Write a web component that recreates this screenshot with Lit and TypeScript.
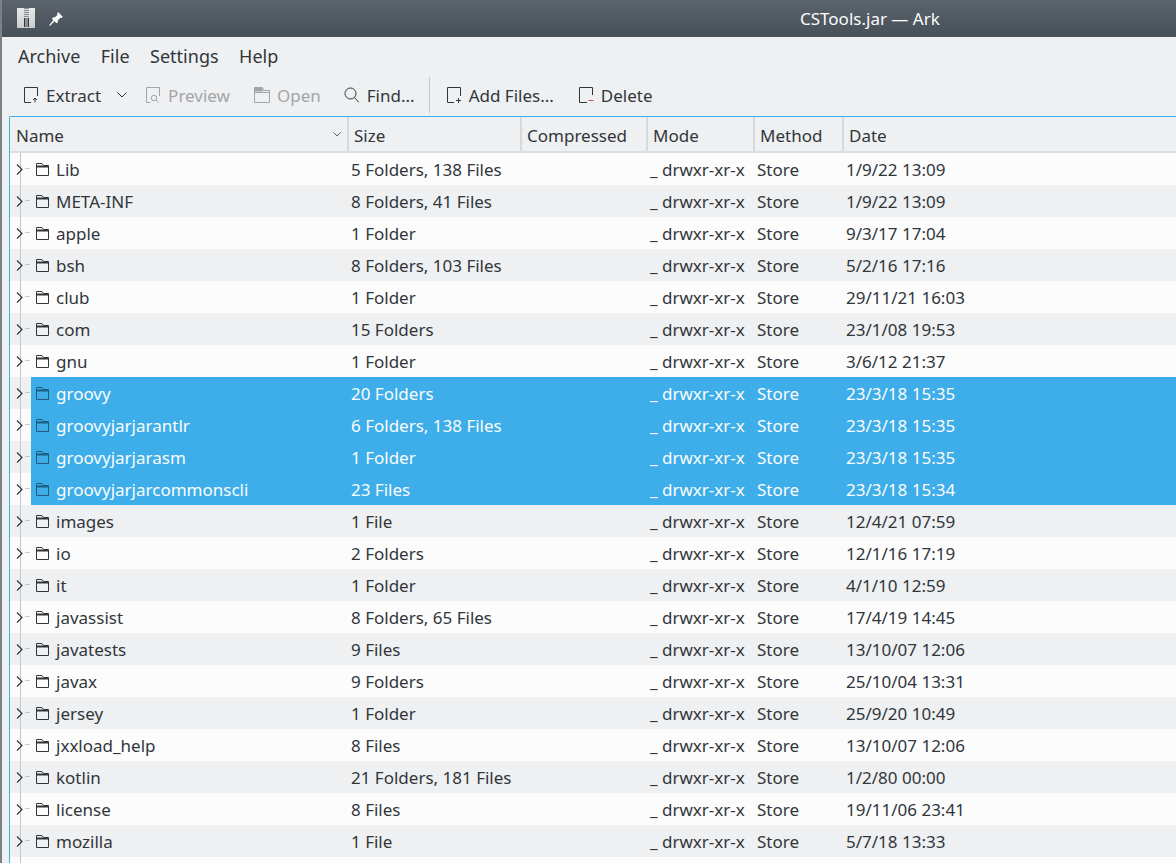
import { LitElement, html, css, svg } from "lit";
import { customElement } from "lit/decorators.js";

const rows: [string, string, string][] = [
  ["Lib", "5 Folders, 138 Files", "1/9/22 13:09"],
  ["META-INF", "8 Folders, 41 Files", "1/9/22 13:09"],
  ["apple", "1 Folder", "9/3/17 17:04"],
  ["bsh", "8 Folders, 103 Files", "5/2/16 17:16"],
  ["club", "1 Folder", "29/11/21 16:03"],
  ["com", "15 Folders", "23/1/08 19:53"],
  ["gnu", "1 Folder", "3/6/12 21:37"],
  ["groovy", "20 Folders", "23/3/18 15:35"],
  ["groovyjarjarantlr", "6 Folders, 138 Files", "23/3/18 15:35"],
  ["groovyjarjarasm", "1 Folder", "23/3/18 15:35"],
  ["groovyjarjarcommonscli", "23 Files", "23/3/18 15:34"],
  ["images", "1 File", "12/4/21 07:59"],
  ["io", "2 Folders", "12/1/16 17:19"],
  ["it", "1 Folder", "4/1/10 12:59"],
  ["javassist", "8 Folders, 65 Files", "17/4/19 14:45"],
  ["javatests", "9 Files", "13/10/07 12:06"],
  ["javax", "9 Folders", "25/10/04 13:31"],
  ["jersey", "1 Folder", "25/9/20 10:49"],
  ["jxxload_help", "8 Files", "13/10/07 12:06"],
  ["kotlin", "21 Folders, 181 Files", "1/2/80 00:00"],
  ["license", "8 Files", "19/11/06 23:41"],
  ["mozilla", "1 File", "5/7/18 13:33"],
];
const selected = new Set([7, 8, 9, 10]);

const ico = (body: unknown) =>
  html`<svg class="ico" width="16" height="16" viewBox="0 0 16 16" fill="none" stroke="currentColor" stroke-width="1">${body}</svg>`;

const extractIcon = ico(svg`<path d="M8 15.5H1.5V.5H14.5V9"/><path d="M12 15.5V11M10 13L12 11L14 13"/>`);
const previewIcon = ico(svg`<path d="M5.5 15.5H1.5V.5H14.5V9"/><circle cx="9" cy="11" r="2.7"/><path d="M11 13L13.5 15.5"/>`);
const openIcon = ico(svg`<path d="M.5 15.5V.5H8.5L10 3.5H15.5V15.5Z"/><path d="M.5 5.5H15.5" stroke-width="1"/><path d="M1 1H8L9.3 4.5H1Z" fill="currentColor" stroke="none"/>`);
const findIcon = ico(svg`<circle cx="7.5" cy="6.5" r="5.5"/><path d="M11.5 10.5L16 15.5"/>`);
const addIcon = ico(svg`<path d="M8 15.5H1.5V.5H14.5V9"/><path d="M12.5 11V16M10 13.5H15"/>`);
const deleteIcon = ico(svg`<path d="M9 15.5H1.5V.5H14.5V8"/><path d="M10.5 13.5H15.5" stroke="#da4453"/>`);
const folder = html`<svg class="folder" width="13" height="13" viewBox="0 0 13 13" fill="none" stroke="currentColor"><path d="M.5 12.5V.5H6L7.5 2.5H12.5V12.5Z"/><path d="M.5 3.5H12.5" stroke-width="2"/></svg>`;
const branch = html`<svg class="branch" width="21" height="32" viewBox="0 0 21 32"><path d="M10.5 0V32M15 15.5H20" stroke="#c4c6c8" fill="none"/><path d="M7 11.5L12 16.5L7 21.5" stroke="#31363b" stroke-width="1.2" fill="none"/></svg>`;

@customElement("app-root")
export class AppRoot extends LitElement {
  static styles = css`
    :host { display: flex; flex-direction: column; width: 1176px; height: 863px; overflow: hidden; background: #eff0f1; color: #31363b; font: 17px/22px "Noto Sans", sans-serif; border-left: 2px solid #7d8184; box-sizing: border-box; }
    .title { height: 37px; flex: none; margin-left: -2px; display: flex; align-items: center; background: linear-gradient(#5b646c, #475057); color: #fcfcfc; position: relative; }
    .zip { margin-left: 17px; width: 18px; height: 20px; background: linear-gradient(#e8eaea, #c9cccd); position: relative; margin-top: -1px; }
    .zip i { position: absolute; left: 7px; top: 0; width: 5px; height: 10px; background: repeating-linear-gradient(#8d9092 0 1px, #d6d8d9 1px 2px); }
    .zip b { position: absolute; left: 7px; top: 10px; width: 5px; height: 9px; background: linear-gradient(90deg, #33383c 0 1px, #8b8e90 1px 4px, #33383c 4px); }
    .pin { margin-left: 14px; }
    .name { position: absolute; left: 800px; top: 8px; }
    .menu { height: 38px; flex: none; display: flex; align-items: center; gap: 20.5px; padding-left: 16px; box-sizing: border-box; font-size: 18px; }
    .tools { height: 41px; flex: none; display: flex; align-items: center; padding-left: 21px; box-sizing: border-box; padding-bottom: 1px; }
    .tool { display: flex; align-items: center; gap: 7px; white-space: nowrap; }
    .tool > span { padding-top: 2px; }
    .tool.off { color: #a2a5a8; }
    .tool.wide { gap: 8px; }
    .ml24 { margin-left: 24px; }
    .ml22 { margin-left: 22px; }
    .ico { flex: none; }
    .chevT { margin-left: 16px; margin-right: 18px; flex: none; }
    .sep { width: 1px; height: 36px; background: #c4c6c8; margin: 0 16px 0 14px; }
    .frame { margin-left: 7px; flex: 1; min-height: 0; border: 1px solid #3daee9; border-width: 1px 0 0 1px; border-top-left-radius: 2px; background: #fcfcfc; }
    .head, .row { display: grid; grid-template-columns: 339px 173px 126px 107px 89px 1fr; }
    .head { height: 36px; background: #eff0f1; border-bottom: 2px solid #dcdddf; box-sizing: border-box; }
    .head > div { padding-left: 5px; padding-top: 3px; display: flex; align-items: center; border-right: 2px solid #d6d8da; box-sizing: border-box; }
    .head > div:last-child { border-right: 0; }
    .head .nm { justify-content: space-between; padding-left: 6px; padding-right: 6px; }
    .chevH { flex: none; margin-top: -3px; }
    .row { height: 32px; background: #fcfcfc; line-height: 34px; position: relative; }
    .row.alt { background: #eff0f1; }
    .cell { padding-left: 2px; white-space: nowrap; overflow: hidden; }
    .first { display: flex; align-items: center; padding: 0; color: #31363b; }
    .branch { flex: none; }
    .nameCell { flex: 1; height: 100%; box-sizing: border-box; display: flex; align-items: center; gap: 7px; padding: 1px 0 0 5px; }
    .row.sel .cell:not(.first), .row.sel .nameCell { background: #3daee9; color: #fcfcfc; }
    .row.sel .folder { color: #1f5d80; }
    .folder { flex: none; margin-top: -1px; }
  `;

  render() {
    const chevT = html`<svg class="chevT" width="10" height="6" viewBox="0 0 10 6" fill="none" stroke="currentColor"><path d="M.5 .5L5 5L9.5 .5"/></svg>`;
    const chevH = html`<svg class="chevH" width="8" height="5" viewBox="0 0 8 5" fill="none" stroke="#5c6065"><path d="M.5 .5L4 4L7.5 .5"/></svg>`;
    return html`
      <div class="title">
        <span class="zip"><i></i><b></b></span>
        <svg class="pin" width="15" height="15" viewBox="0 0 14 14" fill="currentColor"><path d="M8.5 1L13 5.5L11.5 6.5L10.8 6.2L8.3 8.7L8.2 10.5L7 11.5L2.7 7.2L3.8 6L5.5 5.9L8 3.4L7.6 2.5Z"/><path d="M4.5 9.5L1 13.2L1 13L4.2 9.2Z" stroke="currentColor"/></svg>
        <span class="name">CSTools.jar — Ark</span>
      </div>
      <div class="menu"><span>Archive</span><span>File</span><span>Settings</span><span>Help</span></div>
      <div class="tools">
        <div class="tool">${extractIcon}<span>Extract</span></div>${chevT}
        <div class="tool off">${previewIcon}<span>Preview</span></div>
        <div class="tool off ml24">${openIcon}<span>Open</span></div>
        <div class="tool wide ml22">${findIcon}<span>Find...</span></div>
        <div class="sep"></div>
        <div class="tool">${addIcon}<span>Add Files...</span></div>
        <div class="tool ml24">${deleteIcon}<span>Delete</span></div>
      </div>
      <div class="frame">
        <div class="head">
          <div class="nm">Name ${chevH}</div><div>Size</div><div>Compressed</div><div>Mode</div><div>Method</div><div>Date</div>
        </div>
        ${rows.map((r, i) => html`
          <div class="row ${i % 2 ? "alt" : ""} ${selected.has(i) ? "sel" : ""}">
            <div class="cell first">${branch}<div class="nameCell">${folder}<span>${r[0]}</span></div></div>
            <div class="cell">${r[1]}</div>
            <div class="cell"></div>
            <div class="cell">_ drwxr-xr-x</div>
            <div class="cell">Store</div>
            <div class="cell">${r[2]}</div>
          </div>`)}
        <div class="row"><div class="cell first">${branch}</div></div>
      </div>
    `;
  }
}
